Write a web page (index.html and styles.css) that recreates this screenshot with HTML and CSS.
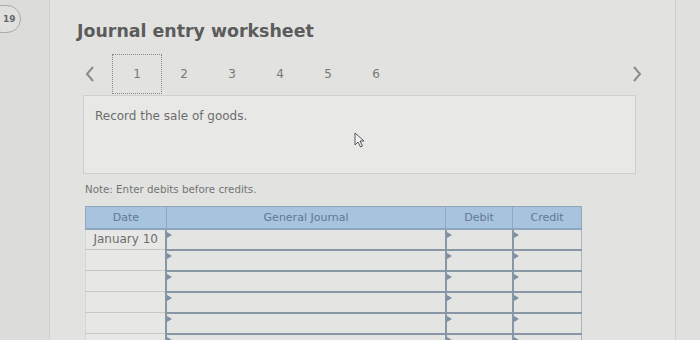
FILE: index.html
```html
<!DOCTYPE html>
<html lang="en">
<head>
  <meta charset="UTF-8" />
  <title>Journal entry worksheet</title>
  <link rel="stylesheet" href="styles.css">
</head>
<body>

  <div class="gutter">
    <div class="badge">19</div>
  </div>

  <div class="main">
    <h1 class="title">Journal entry worksheet</h1>

    <div class="worksheet">
      <div class="steps">
        <span class="arrow">
          <svg width="10" height="16" viewBox="0 0 10 16"><polyline points="8,1 2,8 8,15" /></svg>
        </span>
        <span class="step active">1</span>
        <span class="step">2</span>
        <span class="step">3</span>
        <span class="step">4</span>
        <span class="step">5</span>
        <span class="step">6</span>
        <span class="arrow next">
          <svg width="10" height="16" viewBox="0 0 10 16"><polyline points="2,1 8,8 2,15" /></svg>
        </span>
      </div>

      <div class="prompt">
        <p>Record the sale of goods.</p>
        <svg class="cursor" width="11" height="16" viewBox="0 0 11 16">
          <path d="M1 1 L1 13 L4 10 L6.5 15 L8.5 14 L6 9 L10 9 Z" />
        </svg>
      </div>

      <p class="note">Note: Enter debits before credits.</p>

      <table class="journal">
        <thead>
          <tr>
            <th class="col-date">Date</th>
            <th class="col-account">General Journal</th>
            <th class="col-debit">Debit</th>
            <th class="col-credit">Credit</th>
          </tr>
        </thead>
        <tbody>
          <tr><td class="date">January 10</td><td class="field"></td><td class="field"></td><td class="field"></td></tr>
          <tr><td class="date"></td><td class="field"></td><td class="field"></td><td class="field"></td></tr>
          <tr><td class="date"></td><td class="field"></td><td class="field"></td><td class="field"></td></tr>
          <tr><td class="date"></td><td class="field"></td><td class="field"></td><td class="field"></td></tr>
          <tr><td class="date"></td><td class="field"></td><td class="field"></td><td class="field"></td></tr>
          <tr><td class="date"></td><td class="field"></td><td class="field"></td><td class="field"></td></tr>
        </tbody>
      </table>
    </div>
  </div>

  <div class="edge"></div>

</body>
</html>
```

FILE: styles.css
```css
* {
  margin: 0;
  padding: 0;
  box-sizing: border-box;
}

body {
  font-family: "DejaVu Sans", Verdana, sans-serif;
  display: flex;
  height: 340px;
  overflow: hidden;
  background: #e2e3e1;
  color: #666;
}

.gutter {
  width: 50px;
  flex-shrink: 0;
  background: #dcdddb;
  border-right: 1px solid #cfd0ce;
  position: relative;
}

.badge {
  position: absolute;
  top: 5px;
  left: -12px;
  width: 33px;
  height: 28px;
  border: 1px solid #a9aaa8;
  border-radius: 14px;
  background: #e0e1df;
  font-size: 9px;
  font-weight: bold;
  color: #666;
  padding: 8px 0 0 14px;
}

.main {
  flex: 1;
  padding-left: 27px;
}

.title {
  font-size: 17.4px;
  font-weight: bold;
  color: #5b5c5b;
  margin-top: 21px;
  height: 32px;
}

.worksheet {
  width: 567px;
  margin-left: 6px;
}

.steps {
  display: flex;
  align-items: center;
  height: 42px;
}

.arrow {
  width: 29px;
  display: flex;
  padding-left: 2px;
}

.arrow svg polyline {
  fill: none;
  stroke: #8a8b8a;
  stroke-width: 2;
}

.arrow.next {
  margin-left: auto;
  width: 20px;
}

.step {
  width: 48px;
  height: 40px;
  display: flex;
  align-items: center;
  justify-content: center;
  font-size: 12px;
  color: #777;
}

.step.active {
  width: 50px;
  border: 1px dotted #8a8b8a;
  margin-right: -2px;
}

.prompt {
  width: 553px;
  height: 79px;
  border: 1px solid #cfd0ce;
  background: #e8e9e7;
  position: relative;
  padding: 13px 11px;
}

.prompt p {
  font-size: 12px;
  color: #6c6d6c;
}

.cursor {
  position: absolute;
  left: 270px;
  top: 36px;
}

.cursor path {
  fill: #f2f2f2;
  stroke: #555;
  stroke-width: 1;
}

.note {
  font-size: 10.3px;
  color: #737473;
  margin: 9px 0 0 2px;
  height: 23px;
}

.journal {
  margin-left: 2px;
  border-collapse: collapse;
  width: 497px;
  font-size: 11px;
}

.journal th {
  height: 22px;
  background: #a7c3dd;
  color: #5f7993;
  font-weight: normal;
  border: 1px solid #8fa8c0;
  border-bottom: 2px solid #8ea6bd;
  text-align: center;
}

.col-date { width: 81px; }
.col-account { width: 280px; }
.col-debit { width: 67px; }
.col-credit { width: 69px; }

.journal td {
  height: 21px;
}

.journal td.date {
  background: #e7e8e6;
  border-bottom: 1px solid #c8c9c7;
  border-left: 1px solid #d6d7d5;
  font-size: 12px;
  color: #6c6d6c;
  text-align: center;
}

.journal td.field {
  background: #e4e5e3;
  border-left: 2px solid #8797a6;
  border-right: 1px solid #a9b4be;
  border-bottom: 2px solid #8797a6;
  position: relative;
}

.journal td.field::before {
  content: "";
  position: absolute;
  top: 2px;
  left: 0;
  border-top: 3px solid transparent;
  border-bottom: 3px solid transparent;
  border-left: 5px solid #7d8fa2;
}

.edge {
  width: 25px;
  flex-shrink: 0;
  background: #e0e1df;
  border-left: 1px solid #cfd0ce;
}
```
